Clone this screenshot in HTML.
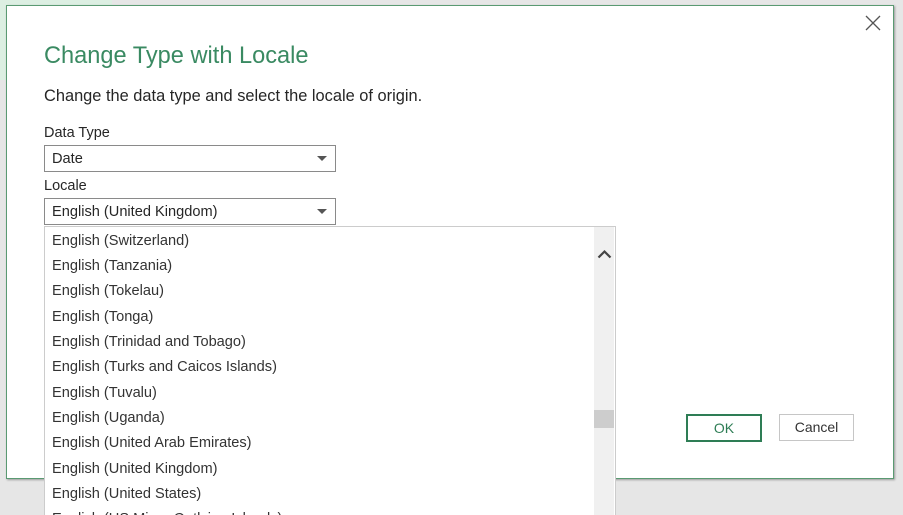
<html style="overflow:hidden;width:903px;height:515px"><head><style>
body{margin:0;width:903px;height:515px;overflow:hidden;background:#e6e6e6;position:relative;font-family:"Liberation Sans",sans-serif;color:#262626}
.a{position:absolute}
.item{position:absolute;left:7px;font-size:14.6px;color:#333}
</style></head><body>
<div class="a" style="left:0;top:0;width:112px;height:80px;background:#dcefe2"></div>
<div class="a" style="left:6px;top:5px;width:886px;height:472px;background:#fff;border:1px solid #5a9a72;box-shadow:1px 1px 2px #999"></div>
<svg class="a" style="left:865px;top:15px" width="16" height="16"><path d="M1 1L15 15M15 1L1 15" stroke="#555" stroke-width="1.3"/></svg>
<div class="a" style="left:44px;top:43px;font-size:23.6px;color:#3a8a62">Change Type with Locale</div>
<div class="a" style="left:44px;top:87px;font-size:16.4px">Change the data type and select the locale of origin.</div>
<div class="a" style="left:44px;top:125px;font-size:14.5px">Data Type</div>
<div class="a" style="left:44px;top:145px;width:290px;height:25px;border:1.5px solid #8a8a8a;background:#fff"><span class="a" style="left:7px;top:5px;font-size:14.6px">Date</span><svg class="a" style="left:272px;top:10px" width="10" height="6"><path d="M0 0H10L5 5Z" fill="#555"/></svg></div>
<div class="a" style="left:44px;top:178px;font-size:14.5px">Locale</div>
<div class="a" style="left:44px;top:198px;width:290px;height:25px;border:1.5px solid #8a8a8a;background:#fff"><span class="a" style="left:7px;top:5px;font-size:14.6px">English (United Kingdom)</span><svg class="a" style="left:272px;top:10px" width="10" height="6"><path d="M0 0H10L5 5Z" fill="#555"/></svg></div>
<div class="a" style="left:44px;top:226px;width:570px;height:289px;overflow:hidden;background:#fff;border:1px solid #ccc;border-bottom:none">
<div class="item" style="top:6px">English (Switzerland)</div>
<div class="item" style="top:31px">English (Tanzania)</div>
<div class="item" style="top:56px">English (Tokelau)</div>
<div class="item" style="top:82px">English (Tonga)</div>
<div class="item" style="top:107px">English (Trinidad and Tobago)</div>
<div class="item" style="top:132px">English (Turks and Caicos Islands)</div>
<div class="item" style="top:158px">English (Tuvalu)</div>
<div class="item" style="top:183px">English (Uganda)</div>
<div class="item" style="top:208px">English (United Arab Emirates)</div>
<div class="item" style="top:234px">English (United Kingdom)</div>
<div class="item" style="top:259px">English (United States)</div>
<div class="item" style="top:284px">English (US Minor Outlying Islands)</div>
<div class="a" style="left:549px;top:0;width:20px;height:300px;background:#f0f0f0"></div>
<div class="a" style="left:549px;top:183px;width:20px;height:18px;background:#cdcdcd"></div>
<svg class="a" style="left:552px;top:22px" width="15" height="10"><path d="M1.5 8.5L7.5 2.5L13.5 8.5" stroke="#444" stroke-width="2.2" fill="none"/></svg>
</div>
<div class="a" style="left:686px;top:414px;width:72px;height:24px;border:2px solid #2e7d55;color:#2e7d55;font-size:14px;text-align:center;line-height:24px">OK</div>
<div class="a" style="left:779px;top:414px;width:73px;height:25px;border:1.5px solid #c6c6c6;font-size:14px;text-align:center;line-height:25px;color:#333">Cancel</div>
</body></html>
